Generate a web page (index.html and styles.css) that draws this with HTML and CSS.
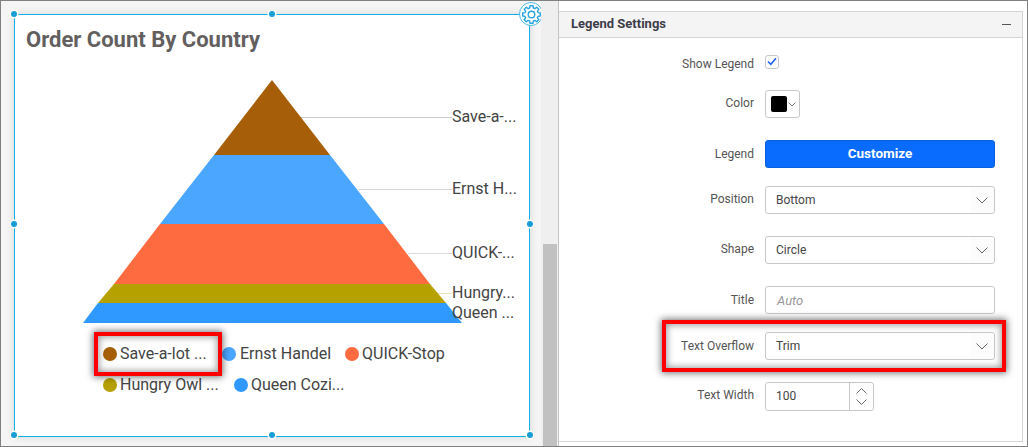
FILE: index.html
```html
<!DOCTYPE html>
<html lang="en">
<head>
<meta charset="utf-8">
<title>Legend Settings</title>
<link rel="stylesheet" href="styles.css">
</head>
<body>
<div class="frame">
  <div class="canvas">
    <div class="widget">
      <h1 class="widget-title">Order Count By Country</h1>
      <svg class="chart" width="514" height="377" viewBox="15 59 514 377">
        <g class="leaders">
          <line x1="300" y1="117.500" x2="452" y2="117.500" stroke="#c9c9c9"/>
          <line x1="358" y1="189.500" x2="452" y2="189.500" stroke="#d6d6d6"/>
          <line x1="408" y1="253.500" x2="452" y2="253.500" stroke="#d9d9d9"/>
          <line x1="438" y1="293.500" x2="452" y2="293.500" stroke="#e8e3b8"/>
        </g>
        <polygon points="272,80 330,155 214,155" fill="#a65f08"/>
        <polygon points="214,155 330,155 384,224 160,224" fill="#4aa6ff"/>
        <polygon points="160,224 384,224 430,284 114,284" fill="#ff6b40"/>
        <polygon points="114,284 430,284 446,303 98,303" fill="#b5a100"/>
        <polygon points="98,303 446,303 462,323 83,323" fill="#3099ff"/>
        <g class="data-label">
          <text x="452" y="122">Save-a-...</text>
          <text x="452" y="194">Ernst H...</text>
          <text x="452" y="258">QUICK-...</text>
          <text x="452" y="298">Hungry...</text>
          <text x="452" y="318">Queen ...</text>
        </g>
        <g class="legend-label">
          <circle cx="110" cy="354" r="7" fill="#a65f08"/>
          <text x="120" y="359">Save-a-lot ...</text>
          <circle cx="229" cy="354" r="7" fill="#4aa6ff"/>
          <text x="240" y="359">Ernst Handel</text>
          <circle cx="352" cy="354" r="7" fill="#ff6b40"/>
          <text x="362" y="359">QUICK-Stop</text>
          <circle cx="110" cy="385" r="7" fill="#b5a100"/>
          <text x="120" y="390">Hungry Owl ...</text>
          <circle cx="241" cy="385" r="7" fill="#3099ff"/>
          <text x="251" y="390">Queen Cozi...</text>
        </g>
      </svg>
      <span class="handle h-tl"></span>
      <span class="handle h-tc"></span>
      <span class="handle h-ml"></span>
      <span class="handle h-mr"></span>
      <span class="handle h-bl"></span>
      <span class="handle h-bc"></span>
      <span class="handle h-br"></span>
      <span class="callout callout-legend"></span>
    </div>
    <div class="gear">
      <svg width="19" height="19" viewBox="-1 -1 26 26" fill="none" stroke="#2aa5e0" stroke-width="1.900" stroke-linejoin="round">
        <path d="M10 1.500h4l.6 3.100 1.900.8 2.600-1.800 2.800 2.800-1.800 2.600.8 1.900 3.100.6v4l-3.100.6-.8 1.900 1.800 2.600-2.800 2.800-2.600-1.800-1.900.8-.6 3.100h-4l-.6-3.100-1.900-.8-2.600 1.800-2.800-2.800 1.800-2.600-.8-1.900-3.100-.6v-4l3.100-.6.8-1.900-1.800-2.600 2.800-2.800 2.600 1.800 1.900-.8z" transform="translate(0 -1.500)"/>
        <circle cx="12" cy="12" r="4.500"/>
      </svg>
    </div>
  </div>
  <div class="scrollbar"><div class="thumb"></div></div>
  <div class="panel">
    <section class="section">
      <header class="section-head">
        <span class="section-title">Legend Settings</span>
        <span class="collapse"></span>
      </header>
      <div class="row row-first">
        <label class="row-label label-low">Show Legend</label>
        <span class="checkbox">
          <svg width="10" height="9" viewBox="0 0 10 9" fill="none" stroke="#1f62f0" stroke-width="1.600"><path d="M1 4.500l2.800 2.800L9 1.200"/></svg>
        </span>
      </div>
      <div class="row gap-14">
        <label class="row-label">Color</label>
        <span class="color-picker">
          <span class="swatch"></span>
          <svg width="8" height="5" viewBox="0 0 8 5" fill="none" stroke="#777"><path d="M.5.500L4 4 7.500.500"/></svg>
        </span>
      </div>
      <div class="row gap-22">
        <label class="row-label label-mid">Legend</label>
        <button class="primary">Customize</button>
      </div>
      <div class="row gap-18">
        <label class="row-label">Position</label>
        <div class="select"><span class="select-text">Bottom</span>
          <span class="arrow"><svg width="12" height="7" viewBox="0 0 12 7" fill="none" stroke="#666"><path d="M.5.500L6 6 11.500.500"/></svg></span>
        </div>
      </div>
      <div class="row gap-22">
        <label class="row-label">Shape</label>
        <div class="select"><span class="select-text">Circle</span>
          <span class="arrow"><svg width="12" height="7" viewBox="0 0 12 7" fill="none" stroke="#666"><path d="M.5.500L6 6 11.500.500"/></svg></span>
        </div>
      </div>
      <div class="row gap-22">
        <label class="row-label label-mid">Title</label>
        <div class="select placeholder"><span class="select-text">Auto</span></div>
      </div>
      <div class="row gap-18">
        <label class="row-label label-mid">Text Overflow</label>
        <div class="select"><span class="select-text">Trim</span>
          <span class="arrow"><svg width="12" height="7" viewBox="0 0 12 7" fill="none" stroke="#666"><path d="M.5.500L6 6 11.500.500"/></svg></span>
        </div>
      </div>
      <div class="row gap-22">
        <label class="row-label">Text Width</label>
        <div class="number">
          <span class="number-value">100</span>
          <span class="spin">
            <svg width="11" height="6" viewBox="0 0 11 6" fill="none" stroke="#666"><path d="M.5 5.500l5-5 5 5"/></svg>
            <svg width="11" height="6" viewBox="0 0 11 6" fill="none" stroke="#666"><path d="M.5.500l5 5 5-5"/></svg>
          </span>
        </div>
      </div>
      <span class="callout callout-overflow"></span>
    </section>
  </div>
</div>
</body>
</html>
```
FILE: styles.css
```css
* { box-sizing: border-box; }
html, body { margin: 0; padding: 0; }
body {
  width: 1028px;
  height: 447px;
  overflow: hidden;
  font-family: Roboto, "Liberation Sans", sans-serif;
  background: #fff;
}
.frame {
  display: flex;
  width: 1028px;
  height: 447px;
  border: 1px solid #808080;
}
.canvas {
  position: relative;
  width: 540px;
  flex: none;
  padding: 13px 0 0 13px;
  background: #f5f5f5;
  overflow: hidden;
}
.widget {
  position: relative;
  width: 516px;
  height: 423px;
  background: #fff;
  border: 1px solid #12b0e6;
  box-shadow: 0 0 8px rgba(0, 0, 0, .12);
}
.widget-title {
  margin: 0;
  height: 44px;
  padding: 11px 0 0 11px;
  font-size: 22px;
  line-height: 28px;
  font-weight: 700;
  color: #635f5f;
}
.chart { display: block; }
.data-label text, .legend-label text {
  font-family: Roboto, sans-serif;
  font-size: 16px;
  fill: #444;
}
.handle {
  position: absolute;
  width: 6px;
  height: 6px;
  border-radius: 50%;
  background: #1a9ed8;
  box-shadow: 0 0 0 1.500px #fff;
}
.h-tl { left: -4px; top: -4px; }
.h-tc { left: 254px; top: -4px; }
.h-ml { left: -4px; top: 206px; }
.h-mr { left: 512px; top: 206px; }
.h-bl { left: -4px; top: 417px; }
.h-bc { left: 254px; top: 417px; }
.h-br { left: 512px; top: 417px; }
.callout {
  position: absolute;
  border: 4px solid #f00;
  box-shadow: 0 0 7px 1px rgba(0, 0, 0, .55), inset 0 0 7px 1px rgba(0, 0, 0, .4);
}
.callout-legend { left: 79px; top: 317px; width: 128px; height: 44px; }
.callout-overflow { left: 103px; top: 308px; width: 344px; height: 52px; }
.gear {
  position: absolute;
  left: 518px;
  top: 1px;
  width: 24px;
  height: 24px;
  display: flex;
  align-items: center;
  justify-content: center;
  border-radius: 50%;
  background: #fff;
  border: 1px solid #4fb9e8;
}
.scrollbar {
  flex: none;
  width: 17px;
  padding: 243px 1px 0 2px;
  background: #efefef;
}
.thumb { height: 100%; background: #c1c1c1; }
.panel {
  flex: 1;
  padding: 10px 4px 4px 0;
  border-left: 1px solid #c4c4c4;
  background: #fff;
}
.section {
  position: relative;
  height: 431px;
  border: 1px solid #d4d4d4;
  border-left: 0;
}
.section-head {
  display: flex;
  align-items: center;
  justify-content: space-between;
  height: 26px;
  padding: 0 11px 0 12px;
  background: #f4f4f4;
  border-bottom: 1px solid #d4d4d4;
}
.section-title {
  margin-top: -2px;
  font-size: 13px;
  font-weight: 700;
  color: #3d3d4a;
}
.collapse { width: 9px; height: 1px; background: #555; }
.row { display: flex; align-items: center; height: 28px; }
.row-first { margin-top: 10px; }
.gap-14 { margin-top: 14px; }
.gap-18 { margin-top: 18px; }
.gap-22 { margin-top: 22px; }
.row-label {
  width: 195px;
  margin: -2px 11px 0 0;
  text-align: right;
  font-size: 12px;
  color: #555;
}
.label-mid { margin-top: 0; }
.label-low { margin-top: 4px; }
.checkbox {
  display: flex;
  align-items: center;
  justify-content: center;
  width: 14px;
  height: 14px;
  margin-top: -1px;
  border: 1px solid #c8c8c8;
  border-radius: 3px;
  background: #fff;
}
.color-picker {
  display: flex;
  align-items: center;
  gap: 1px;
  width: 35px;
  height: 28px;
  padding-left: 5px;
  border: 1px solid #c8c8c8;
  border-radius: 3px;
}
.swatch { width: 16px; height: 16px; background: #000; border-radius: 2px; }
.primary {
  width: 230px;
  height: 28px;
  padding: 0 0 2px;
  border: 1px solid #0a5fe0;
  border-radius: 3px;
  background: #0a6cff;
  color: #fff;
  font: 700 13.500px Roboto, sans-serif;
}
.select {
  display: flex;
  align-items: stretch;
  justify-content: space-between;
  width: 230px;
  height: 28px;
  padding-left: 10px;
  border: 1px solid #c8c8c8;
  border-radius: 3px;
  font-size: 12px;
  color: #444;
}
.select-text { align-self: center; margin-top: -1px; }
.arrow {
  display: flex;
  align-items: center;
  justify-content: center;
  width: 24px;
  border-radius: 0 3px 3px 0;
  background: #fcfcfc;
}
.placeholder { padding-left: 11px; font-size: 13px; font-style: italic; color: #999; }
.placeholder .select-text { margin-top: 0; }
.number {
  display: flex;
  align-items: center;
  width: 109px;
  height: 29px;
  border: 1px solid #c8c8c8;
  border-radius: 3px;
  font-size: 12px;
  color: #444;
}
.number-value { flex: 1; padding-left: 10px; }
.spin {
  display: flex;
  flex-direction: column;
  align-items: center;
  justify-content: center;
  gap: 5px;
  width: 24px;
  height: 100%;
  border-left: 1px solid #c8c8c8;
}
```
